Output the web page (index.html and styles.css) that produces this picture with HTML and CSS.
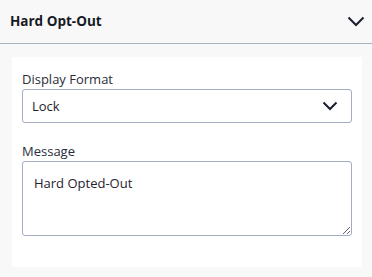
FILE: index.html
```html
<!DOCTYPE html>
<html>
<head>
<meta charset="utf-8">
<link rel="stylesheet" href="styles.css">
</head>
<body>
<div class="panel">
  <div class="panel-header">
    <span class="panel-title">Hard Opt-Out</span>
    <svg class="chev-lg" width="18" height="11" viewBox="0 0 18 11"><polyline points="1.5,1.5 9,9 16.5,1.5" fill="none" stroke="#1b1f2e" stroke-width="2"/></svg>
  </div>
  <div class="panel-body">
    <div class="card">
      <div class="field">
        <label class="field-label">Display Format</label>
        <div class="select">
          <span>Lock</span>
          <svg width="16" height="10" viewBox="0 0 16 10"><polyline points="1.5,1.5 8,8 14.5,1.5" fill="none" stroke="#1b1f2e" stroke-width="2"/></svg>
        </div>
      </div>
      <div class="field">
        <label class="field-label">Message</label>
        <textarea class="textarea">Hard Opted-Out</textarea>
      </div>
    </div>
  </div>
</div>
</body>
</html>
```
FILE: styles.css
```css
html, body {
  margin: 0;
  padding: 0;
  background: #f8f8f8;
  font-family: "Open Sans", "Liberation Sans", sans-serif;
  color: #1f2230;
}
.panel-header {
  height: 44px;
  box-sizing: border-box;
  border-bottom: 1px solid #a9b3c6;
  display: flex;
  align-items: center;
  justify-content: space-between;
  padding: 0 7px 2px 10px;
}
.panel-title {
  font-weight: 700;
  font-size: 13.5px;
  color: #161a24;
}
.chev-lg { margin-top: 2px; }
.panel-body {
  padding: 13px 10px 10px 12px;
}
.card {
  background: #fff;
  padding: 13px 10px 31px 10px;
}
.field { display: flex; flex-direction: column; }
.field + .field { margin-top: 19px; }
.field-label {
  font-size: 13px;
  line-height: 18px;
  color: #2a2d38;
  margin-bottom: 1px;
}
.select {
  height: 34px;
  box-sizing: border-box;
  border: 1px solid #a3acc2;
  border-radius: 3px;
  display: flex;
  align-items: center;
  justify-content: space-between;
  padding: 0 13px 0 9px;
  font-size: 13px;
  color: #1f2230;
}
.textarea {
  height: 75px;
  box-sizing: border-box;
  border: 1px solid #a3acc2;
  border-radius: 3px;
  padding: 12px 11px;
  font-family: inherit;
  font-size: 13px;
  line-height: 18px;
  color: #1f2230;
  resize: vertical;
  outline: none;
  margin: 0;
  display: block;
}
```
